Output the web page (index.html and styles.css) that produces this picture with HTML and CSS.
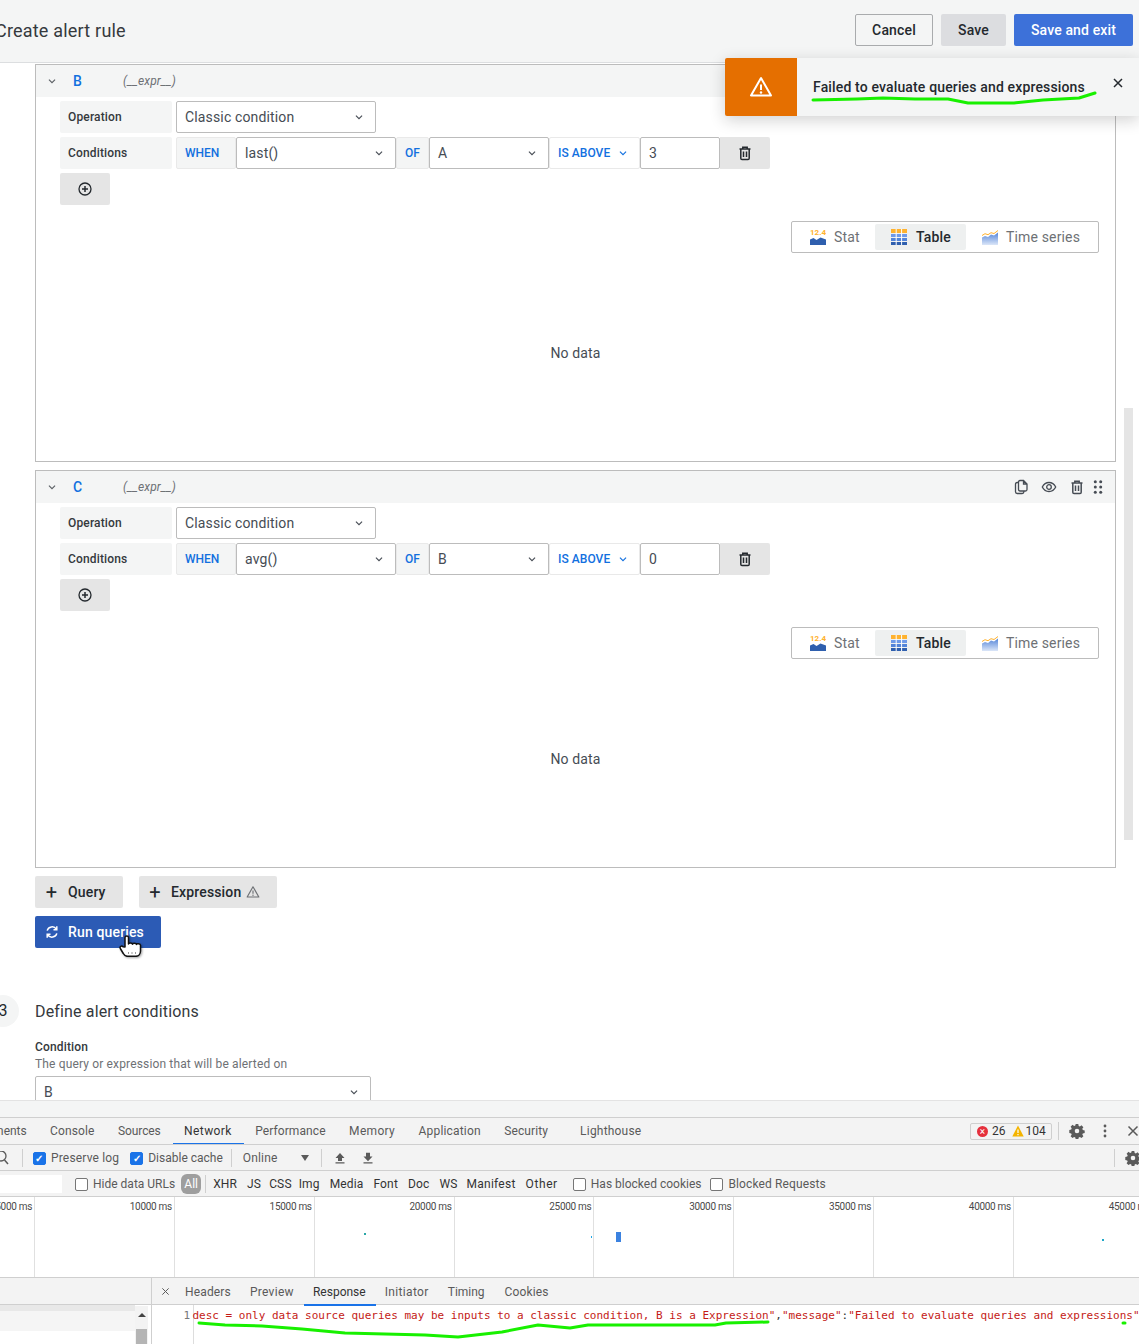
FILE: index.html
```html
<!DOCTYPE html>
<html lang="en">
<head>
<meta charset="utf-8">
<title>Create alert rule</title>
<link rel="stylesheet" href="styles.css">
</head>
<body>
<svg class="sprite" width="0" height="0">
  <defs>
    <symbol id="chev" viewBox="0 0 16 16"><path d="M4.500 6.500 8 10l3.500-3.500" fill="none" stroke="currentColor" stroke-width="1.300"/></symbol>
    <symbol id="trash" viewBox="0 0 16 16"><path d="M2.500 4h11M5.800 4V2.300h4.400V4M3.800 4v9.200c0 .7.500 1.300 1.200 1.300h6c.7 0 1.200-.6 1.200-1.300V4M6.500 6.500v5.500M9.500 6.500v5.500" fill="none" stroke="currentColor" stroke-width="1.500"/></symbol>
    <symbol id="plusc" viewBox="0 0 16 16"><circle cx="8" cy="8" r="6" fill="none" stroke="currentColor" stroke-width="1.300"/><path d="M8 5v6M5 8h6" stroke="currentColor" stroke-width="1.500"/></symbol>
    <symbol id="copy" viewBox="0 0 16 16"><path d="M5.500 3.500H4.200C3 3.500 2.500 4 2.500 5.200v7.600c0 1.200.5 1.700 1.700 1.700h5c1.200 0 1.700-.5 1.700-1.700v-.8M5.500 10.300V3c0-1 .5-1.500 1.500-1.500h3.500l3.500 3.500v5.500c0 1-.5 1.500-1.500 1.500H7c-1 0-1.500-.5-1.500-1.700zM10.500 1.500V5H14" fill="none" stroke="currentColor" stroke-width="1.300"/></symbol>
    <symbol id="eye" viewBox="0 0 16 16"><path d="M1.300 8C2.800 5 5.200 3.500 8 3.500S13.200 5 14.700 8c-1.500 3-3.900 4.500-6.700 4.500S2.800 11 1.300 8z" fill="none" stroke="currentColor" stroke-width="1.300"/><circle cx="8" cy="8" r="2.300" fill="none" stroke="currentColor" stroke-width="1.300"/></symbol>
    <symbol id="dots" viewBox="0 0 16 16"><g fill="currentColor"><circle cx="5.300" cy="2.800" r="1.500"/><circle cx="10.700" cy="2.800" r="1.500"/><circle cx="5.300" cy="8" r="1.500"/><circle cx="10.700" cy="8" r="1.500"/><circle cx="5.300" cy="13.200" r="1.500"/><circle cx="10.700" cy="13.200" r="1.500"/></g></symbol>
    <symbol id="stat" viewBox="0 0 16 16"><path d="M0 10.500 3.500 9l3 2 4-2.500L16 10.500V16H0z" fill="#2f5fae"/><text x="0" y="6" font-family="Roboto" font-size="8" font-weight="700" letter-spacing="0" fill="#ffb22e">12.4</text></symbol>
    <symbol id="tbl" viewBox="0 0 16 16"><rect width="16" height="4" fill="#ffb22e"/><rect y="5" width="16" height="3" fill="#6f9ae8"/><rect y="9" width="16" height="3" fill="#5384d8"/><rect y="13" width="16" height="3" fill="#2f5fae"/><path d="M5.200 0v16M10.600 0v16" stroke="#fff" stroke-width="1"/></symbol>
    <symbol id="ts" viewBox="0 0 16 16"><defs><linearGradient id="tsg" x1="0" y1="0" x2="0" y2="1"><stop offset="0" stop-color="#5384d8"/><stop offset="1" stop-color="#dbe6f8"/></linearGradient></defs><path d="M0 8.500l3-1.500 3 1 3-2.500 3 1 4-3V16H0z" fill="url(#tsg)"/><path d="M0 6.500l3-1.800 3 1 3-2 3 .8L16 1.500" fill="none" stroke="#ffb22e" stroke-width="1"/></symbol>
    <symbol id="warn" viewBox="0 0 24 24"><path d="M12 3 2 20.500h20z" fill="none" stroke="currentColor" stroke-width="2" stroke-linejoin="round"/><path d="M12 9.500v5.500" stroke="currentColor" stroke-width="2"/><circle cx="12" cy="17.500" r="1.200" fill="currentColor"/></symbol>
    <symbol id="gear" viewBox="0 0 16 16"><path fill="currentColor" fill-rule="evenodd" d="M6.700 1h2.600l.4 1.900 1.200.5 1.600-1.100 1.900 1.900-1.100 1.600.5 1.200 1.900.4v2.600l-1.900.4-.5 1.200 1.100 1.600-1.900 1.900-1.600-1.100-1.200.5-.4 1.900H6.700l-.4-1.900-1.200-.5-1.600 1.100-1.900-1.900 1.100-1.600-.5-1.200-1.900-.4V6.900l1.900-.4.5-1.200-1.100-1.600 1.900-1.900 1.600 1.100 1.200-.5zM8 5.700a2.300 2.300 0 1 0 0 4.600 2.300 2.300 0 0 0 0-4.600z"/></symbol>
  </defs>
</svg>

<div class="app">
  <header class="topbar">
    <h1 class="page-title">Create alert rule</h1>
    <div class="actions">
      <button class="btn btn-outline">Cancel</button>
      <button class="btn btn-grey">Save</button>
      <button class="btn btn-blue">Save and exit</button>
    </div>
  </header>

  <main class="main">
    <section class="card">
      <div class="card-head">
        <svg class="ic14 muted"><use href="#chev"/></svg>
        <span class="ref">B</span>
        <span class="expr">(__expr__)</span>
      </div>
      <div class="card-body">
        <div class="row">
          <label class="lbl">Operation</label>
          <div class="sel sel-op"><span>Classic condition</span><svg class="ic14"><use href="#chev"/></svg></div>
        </div>
        <div class="row">
          <label class="lbl">Conditions</label>
          <div class="kw kw-when">WHEN</div>
          <div class="sel sel-fn"><span>last()</span><svg class="ic14"><use href="#chev"/></svg></div>
          <div class="kw kw-of">OF</div>
          <div class="sel sel-q"><span>A</span><svg class="ic14"><use href="#chev"/></svg></div>
          <div class="kw kw-above">IS ABOVE<svg class="ic14"><use href="#chev"/></svg></div>
          <div class="val">3</div>
          <div class="del"><svg class="ic16"><use href="#trash"/></svg></div>
        </div>
        <div class="add"><svg class="ic16"><use href="#plusc"/></svg></div>
        <div class="viz-row">
          <div class="viz">
            <span class="viz-item"><svg class="ic16"><use href="#stat"/></svg>Stat</span>
            <span class="viz-item active"><svg class="ic16"><use href="#tbl"/></svg>Table</span>
            <span class="viz-item"><svg class="ic16"><use href="#ts"/></svg>Time series</span>
          </div>
        </div>
        <div class="nodata">No data</div>
      </div>
    </section>

    <section class="card">
      <div class="card-head">
        <svg class="ic14 muted"><use href="#chev"/></svg>
        <span class="ref">C</span>
        <span class="expr">(__expr__)</span>
        <div class="card-tools">
          <svg class="ic16"><use href="#copy"/></svg>
          <svg class="ic16"><use href="#eye"/></svg>
          <svg class="ic16"><use href="#trash"/></svg>
          <svg class="ic16 grip"><use href="#dots"/></svg>
        </div>
      </div>
      <div class="card-body">
        <div class="row">
          <label class="lbl">Operation</label>
          <div class="sel sel-op"><span>Classic condition</span><svg class="ic14"><use href="#chev"/></svg></div>
        </div>
        <div class="row">
          <label class="lbl">Conditions</label>
          <div class="kw kw-when">WHEN</div>
          <div class="sel sel-fn"><span>avg()</span><svg class="ic14"><use href="#chev"/></svg></div>
          <div class="kw kw-of">OF</div>
          <div class="sel sel-q"><span>B</span><svg class="ic14"><use href="#chev"/></svg></div>
          <div class="kw kw-above">IS ABOVE<svg class="ic14"><use href="#chev"/></svg></div>
          <div class="val">0</div>
          <div class="del"><svg class="ic16"><use href="#trash"/></svg></div>
        </div>
        <div class="add"><svg class="ic16"><use href="#plusc"/></svg></div>
        <div class="viz-row">
          <div class="viz">
            <span class="viz-item"><svg class="ic16"><use href="#stat"/></svg>Stat</span>
            <span class="viz-item active"><svg class="ic16"><use href="#tbl"/></svg>Table</span>
            <span class="viz-item"><svg class="ic16"><use href="#ts"/></svg>Time series</span>
          </div>
        </div>
        <div class="nodata">No data</div>
      </div>
    </section>

    <div class="add-row">
      <button class="btn btn-soft btn-query"><span class="plus">+</span>Query</button>
      <button class="btn btn-soft btn-expr"><span class="plus">+</span>Expression<svg class="ic14 warn-ic"><use href="#warn"/></svg></button>
    </div>
    <button class="btn btn-run">
      <svg class="ic14" viewBox="0 0 16 16"><path d="M2.500 6.500A5.700 5.700 0 0 1 13 5M13.500 9.500A5.700 5.700 0 0 1 3 11M13.500 1.500V5.300H9.700M2.500 14.500v-3.800h3.800" fill="none" stroke="currentColor" stroke-width="1.700"/></svg>
      Run queries
    </button>

    <div class="sec-head">
      <span class="sec-num">3</span>
      <h2 class="sec-title">Define alert conditions</h2>
    </div>
    <div class="field-label">Condition</div>
    <div class="field-desc">The query or expression that will be alerted on</div>
    <div class="sel sel-cond"><span>B</span><svg class="ic14"><use href="#chev"/></svg></div>
    <div class="page-scroll"></div>
  </main>

  <div class="strip"></div>

  <div class="dt">
    <div class="dt-bar dt-tabs">
      <span class="tab tab-first">Elements</span>
      <span class="tab t-console">Console</span>
      <span class="tab t-sources">Sources</span>
      <span class="tab on t-network">Network</span>
      <span class="tab t-perf">Performance</span>
      <span class="tab t-memory">Memory</span>
      <span class="tab t-app">Application</span>
      <span class="tab t-sec">Security</span>
      <span class="tab tab-light">Lighthouse</span>
      <span class="dt-right">
        <span class="badge"><i class="b-err">×</i>26<svg class="b-warn" viewBox="0 0 12 12"><path d="M6 .5 .3 11.500h11.400z" fill="#f4b400"/><path d="M6 4.500v3.500M6 9v1.200" stroke="#fff" stroke-width="1.200"/></svg>104</span>
        <i class="vsep"></i>
        <svg class="dt-gear"><use href="#gear"/></svg>
        <svg class="dt-more" viewBox="0 0 4 14"><g fill="#5a5a5a"><circle cx="2" cy="2" r="1.400"/><circle cx="2" cy="7" r="1.400"/><circle cx="2" cy="12" r="1.400"/></g></svg>
        <svg class="dt-x" viewBox="0 0 12 12"><path d="M1.500 1.500l9 9M10.500 1.500l-9 9" stroke="#5a5a5a" stroke-width="1.500"/></svg>
      </span>
    </div>

    <div class="dt-bar dt-tool">
      <svg class="dt-search" viewBox="0 0 14 14"><circle cx="4" cy="5" r="5" fill="none" stroke="#5a5a5a" stroke-width="1.300"/><path d="M7.500 9l3.500 4" stroke="#5a5a5a" stroke-width="1.500"/></svg>
      <i class="vsep s1"></i>
      <label class="chk c1"><i class="box checked">✓</i>Preserve log</label>
      <label class="chk c2"><i class="box checked">✓</i>Disable cache</label>
      <i class="vsep s2"></i>
      <span class="online">Online</span>
      <i class="caret"></i>
      <i class="vsep s3"></i>
      <svg class="arrow a1" viewBox="0 0 12 12"><path d="M6 1 1.500 6H4v3h4V6h2.500zM1.500 10.300h9v1.200h-9z" fill="#5a5a5a"/></svg>
      <svg class="arrow a2" viewBox="0 0 12 12"><path d="M6 9.200 1.500 4.500H4V.8h4v3.700h2.500zM1.500 10.300h9v1.200h-9z" fill="#5a5a5a"/></svg>
      <span class="dt-right">
        <i class="vsep"></i>
        <svg class="dt-gear g2"><use href="#gear"/></svg>
      </span>
    </div>

    <div class="dt-bar dt-filter">
      <span class="filter-input"></span>
      <label class="chk f1"><i class="box"></i>Hide data URLs</label>
      <span class="pill">All</span>
      <i class="vsep s4"></i>
      <span class="ft ft-xhr">XHR</span>
      <span class="ft ft-js">JS</span>
      <span class="ft ft-css">CSS</span>
      <span class="ft ft-img">Img</span>
      <span class="ft ft-media">Media</span>
      <span class="ft ft-font">Font</span>
      <span class="ft ft-doc">Doc</span>
      <span class="ft ft-ws">WS</span>
      <span class="ft ft-man">Manifest</span>
      <span class="ft ft-other">Other</span>
      <label class="chk f2"><i class="box"></i>Has blocked cookies</label>
      <label class="chk f3"><i class="box"></i>Blocked Requests</label>
    </div>

    <div class="timeline">
      <div class="tick">5000 ms</div>
      <div class="tick">10000 ms</div>
      <div class="tick">15000 ms</div>
      <div class="tick">20000 ms</div>
      <div class="tick">25000 ms</div>
      <div class="tick">30000 ms</div>
      <div class="tick">35000 ms</div>
      <div class="tick">40000 ms</div>
      <div class="tick">45000 ms</div>
      <i class="mark m1"></i><i class="mark m2"></i><i class="mark m3"></i><i class="mark m4"></i>
    </div>

    <div class="split">
      <div class="list-pane">
        <div class="list-head"></div>
        <div class="list-gap"></div>
        <div class="list-row"></div>
        <div class="list-scroll"><i class="up"></i><i class="thumb"></i></div>
      </div>
      <div class="detail">
        <div class="detail-tabs">
          <svg class="detail-x" viewBox="0 0 10 10"><path d="M1.500 1.500l7 7M8.500 1.500l-7 7" stroke="#5a5a5a" stroke-width="1.100"/></svg>
          <span class="dtab d-head">Headers</span>
          <span class="dtab d-prev">Preview</span>
          <span class="dtab on">Response</span>
          <span class="dtab d-init">Initiator</span>
          <span class="dtab d-time">Timing</span>
          <span class="dtab d-head">Cookies</span>
        </div>
        <div class="code">
          <div class="gutter">1</div>
          <div class="code-line"><span class="str">desc = only data source queries may be inputs to a classic condition, B is a Expression"</span><span class="pun">,</span><span class="str">"message"</span><span class="pun">:</span><span class="str">"Failed to evaluate queries and expressions"</span></div>
        </div>
      </div>
    </div>
  </div>
</div>

<div class="toast">
  <div class="toast-icon"><svg class="toast-warn"><use href="#warn"/></svg></div>
  <div class="toast-text">Failed to evaluate queries and expressions</div>
  <svg class="toast-x" viewBox="0 0 12 12"><path d="M2 2l8 8M10 2l-8 8" stroke="#24292e" stroke-width="1.500"/></svg>
</div>

<svg class="hand" viewBox="0 0 23 22">
  <path d="M6 12V2.500c0-2 3.500-2 3.500 0V9c0-1.300 4-1.300 4 .2 0-1.300 4-1.300 4 .3 0-1.300 4-1 4 .8V16c0 3-2 5.300-4.800 5.300H8.500c-2 0-3.200-1-4.200-2.800l-3-5c-1.100-2 1.500-3.200 2.700-1.700z" fill="#fff" stroke="#111" stroke-width="1.500" stroke-linejoin="round"/>
  <path d="M9.500 17v2M13 17v2M16.500 17v2" stroke="#999" stroke-width="1"/>
</svg>

<svg class="scribble" viewBox="0 0 1139 1344">
  <polyline points="813,100 857,99 883,98 915,99 948,99 968,103 1014,103 1043,100 1079,98 1095,93"/>
  <polyline points="199,1323 225,1325 262,1326 302,1329 345,1333 425,1335 458,1337 502,1332 538,1325 570,1328 588,1325 715,1325 726,1323 768,1322"/>
  <polyline points="1123,1323 1125,1323"/>
</svg>
</body>
</html>
```

FILE: styles.css
```css
* { box-sizing: border-box; }
html, body { margin: 0; padding: 0; width: 1139px; height: 1344px; overflow: hidden; background: #fff; }
body { position: relative; font-family: Roboto, sans-serif; color: #24292e; font-size: 14px; letter-spacing: .15px; }
.sprite { position: absolute; }
button { font-family: inherit; letter-spacing: inherit; }
i { font-style: normal; display: block; }

.app { display: flex; flex-direction: column; height: 1344px; }

.topbar { height: 63px; flex: none; background: #f4f5f5; border-bottom: 1px solid #dcdee0; display: flex; justify-content: space-between; padding: 14px 6px 0 0; }
.page-title { margin: 1px 0 0 -5px; font-size: 18px; font-weight: 400; line-height: 32px; color: #35393d; letter-spacing: .2px; }
.actions { display: flex; gap: 8px; }

.btn { height: 32px; border: 0; border-radius: 2px; font-size: 14px; font-weight: 500; display: inline-flex; align-items: center; padding: 0; white-space: nowrap; }
.btn-outline { width: 78px; justify-content: center; background: transparent; border: 1px solid #a9abad; color: #24292e; }
.btn-grey { width: 65px; justify-content: center; background: #dcdde0; color: #24292e; }
.btn-blue { width: 119px; justify-content: center; background: #3d71d9; color: #fff; }

.main { height: 1037px; flex: none; overflow: hidden; padding: 1px 23px 0 35px; position: relative; }

.card { height: 398px; border: 1px solid #bcbcbc; margin-bottom: 8px; }
.card-head { height: 32px; background: #f4f5f5; display: flex; align-items: center; padding-left: 9px; }
.muted { color: #5a5f64; }
.ref { color: #1270df; font-weight: 500; margin-left: 14px; width: 50px; }
.expr { color: #6e7175; font-size: 12px; font-style: italic; }
.card-tools { margin-left: auto; display: flex; align-items: center; color: #464c54; padding-right: 9px; }
.card-tools svg { margin-left: 12px; }
.card-tools .grip { margin-left: 5px; }

.card-body { padding: 4px 24px 0; position: relative; }
.row { display: flex; height: 32px; margin-bottom: 4px; }
.lbl { width: 112px; margin-right: 4px; background: #f4f5f5; border-radius: 2px; font-size: 12px; font-weight: 500; line-height: 32px; padding-left: 8px; color: #35393d; }
.sel { height: 32px; background: #fff; border: 1px solid #bcbcbc; border-radius: 2px; display: flex; align-items: center; justify-content: space-between; padding: 0 9px 0 8px; color: #464c54; font-size: 14px; flex: none; }
.sel-op { width: 200px; }
.sel-fn { width: 160px; }
.sel-q { width: 120px; }
.sel-cond { width: 336px; }
.ic14 { width: 14px; height: 14px; flex: none; }
.ic16 { width: 16px; height: 16px; flex: none; }
.kw { height: 32px; background: #f4f5f5; border: 1px solid #e9e9e9; color: #1270df; font-size: 12px; font-weight: 500; display: flex; align-items: center; justify-content: center; border-radius: 2px; flex: none; letter-spacing: 0; }
.kw-when { width: 60px; justify-content: flex-start; padding-left: 8px; }
.kw-of { width: 33px; }
.kw-above { width: 91px; background: #fff; gap: 6px; justify-content: flex-start; padding-left: 8px; letter-spacing: .05px; }
.val { width: 80px; height: 32px; border: 1px solid #bcbcbc; border-radius: 2px; padding-left: 8px; line-height: 30px; color: #464c54; }
.del { width: 50px; height: 32px; background: #e5e5e5; display: flex; align-items: center; justify-content: center; border-radius: 0 2px 2px 0; color: #24292e; }
.add { width: 50px; height: 32px; background: #e5e5e5; border-radius: 2px; display: flex; align-items: center; justify-content: center; color: #24292e; }

.viz-row { display: flex; justify-content: flex-end; margin-top: 16px; margin-right: -8px; }
.viz { width: 308px; height: 32px; border: 1px solid #bcbcbc; border-radius: 2px; display: flex; align-items: center; padding: 2px 0 2px 2px; }
.viz-item { height: 26px; display: flex; align-items: center; gap: 8px; color: #6e7175; padding: 0 16px; }
.viz-item:first-child { width: 81px; }
.viz-item.active { width: 91px; background: #eef0f0; border-radius: 2px; color: #24292e; font-weight: 500; gap: 9px; }
.nodata { text-align: center; margin: 92px -1px 0; line-height: 16px; color: #464c54; }

.add-row { display: flex; gap: 16px; margin-bottom: 8px; }
.btn-soft { background: #e5e5e5; color: #24292e; }
.plus { font-size: 20px; font-weight: 400; width: 33px; text-align: center; line-height: 28px; }
.btn-query { width: 88px; }
.btn-expr { width: 138px; }
.btn-expr .plus { width: 32px; }
.warn-ic { margin-left: 5px; color: #6e7175; }
.btn-run { display: flex; width: 126px; background: #2c5bb5; color: #fff; gap: 9px; padding-left: 10px; }

.sec-head { display: flex; align-items: center; margin: 47px 0 0 -48px; gap: 16px; height: 32px; }
.sec-num { width: 32px; height: 32px; border-radius: 50%; background: #f4f5f5; text-align: center; line-height: 32px; font-size: 16px; color: #24292e; }
.sec-title { margin: 0; font-size: 16px; font-weight: 400; color: #35393d; }
.field-label { margin-top: 12px; font-size: 12px; font-weight: 500; line-height: 16px; color: #35393d; }
.field-desc { font-size: 12px; line-height: 16px; margin-top: 1px; margin-bottom: 4px; color: #6e7175; }
.page-scroll { position: absolute; right: 6px; top: 345px; width: 9px; height: 432px; background: #e5e5e5; }

.strip { height: 17px; flex: none; background: #f4f5f5; border-top: 1px solid #e3e3e3; }

.dt { flex: 1; background: #f3f3f3; font-size: 12px; color: #5a5a5a; overflow: hidden; letter-spacing: 0; }
.dt-bar { display: flex; align-items: center; border-top: 1px solid #cfcfcf; white-space: nowrap; position: relative; }
.dt-tabs { height: 27px; padding-left: 27px; }
.tab { margin-left: 23.400px; line-height: 26px; position: relative; }
.tab-first { margin-left: -50px; width: 49.600px; }
.t-console { letter-spacing: .15px; }
.t-sources { letter-spacing: -.1px; }
.t-network { letter-spacing: .4px; }
.t-perf { letter-spacing: .1px; }
.t-memory { letter-spacing: .33px; }
.t-app { letter-spacing: .18px; }
.t-sec { letter-spacing: .12px; }
.tab-light { margin-left: 32px; letter-spacing: .2px; }
.tab.on { color: #333; }
.tab.on::after { content: ""; position: absolute; left: -11px; right: -12px; bottom: -1px; height: 2px; background: #1a73e8; }
.dt-right { margin-left: auto; display: flex; align-items: center; }
.badge { width: 82px; height: 17px; border: 1px solid #cfcfcf; border-radius: 2px; background: #f3f3f3; display: flex; align-items: center; padding-left: 6px; color: #333; }
.b-err { width: 11px; height: 11px; border-radius: 50%; background: #e5303c; color: #fff; font-size: 10px; line-height: 11px; text-align: center; margin-right: 4px; }
.b-warn { width: 12px; height: 12px; margin: 0 2px 0 6px; }
.vsep { width: 1px; height: 18px; background: #cfcfcf; flex: none; }
.dt-tabs .vsep { margin-left: 6px; }
.dt-gear { width: 16px; height: 16px; color: #5a5a5a; flex: none; }
.dt-tabs .dt-gear { margin-left: 10px; }
.dt-more { width: 4px; height: 14px; margin-left: 18px; }
.dt-x { width: 12px; height: 12px; margin-left: 20px; flex: none; }

.dt-tool { height: 26px; padding-top: 1px; }
.dt-search { width: 14px; height: 14px; margin-left: -3px; }
.s1 { margin-left: 11px; }
.chk { display: flex; align-items: center; }
.box { width: 13px; height: 13px; border: 1px solid #767676; border-radius: 2px; background: #fff; margin-right: 5px; color: #fff; font-size: 10px; line-height: 12px; text-align: center; font-weight: 700; }
.box.checked { background: #1a73e8; border-color: #1a73e8; }
.c1 { margin-left: 10px; letter-spacing: .17px; }
.c2 { margin-left: 11px; }
.s2 { margin-left: 8px; }
.online { margin-left: 11px; letter-spacing: .15px; }
.caret { width: 0; height: 0; border-left: 4px solid transparent; border-right: 4px solid transparent; border-top: 6px solid #5a5a5a; margin-left: 24px; }
.s3 { margin-left: 12px; }
.arrow { width: 12px; height: 12px; flex: none; }
.a1 { margin-left: 12px; }
.a2 { margin-left: 16px; }
.g2 { margin-left: 10px; margin-right: -2px; }

.dt-filter { height: 26px; padding-top: 1px; }
.filter-input { width: 62px; height: 18px; background: #fff; flex: none; }
.f1 { margin-left: 13px; }
.pill { width: 20px; height: 20px; background: #9e9e9e; color: #fff; border-radius: 6px; text-align: center; line-height: 20px; margin-left: 6px; flex: none; }
.s4 { margin-left: 4px; }
.ft { color: #333; flex: none; letter-spacing: .15px; }
.ft-xhr { margin-left: 7px; }
.ft-js { margin-left: 10px; }
.ft-css { margin-left: 8px; }
.ft-img { margin-left: 7px; }
.ft-media { margin-left: 10px; }
.ft-font { margin-left: 10px; }
.ft-doc { margin-left: 10px; }
.ft-ws { margin-left: 10px; }
.ft-man { margin-left: 9px; letter-spacing: .25px; }
.ft-other { margin-left: 10px; letter-spacing: .6px; }
.f2 { margin-left: 15px; }
.f3 { margin-left: 9px; letter-spacing: .12px; }

.timeline { height: 82px; background: #fff; border-top: 1px solid #cfcfcf; border-bottom: 1px solid #cfcfcf; display: flex; position: relative; font-size: 10px; letter-spacing: -.3px; color: #4a4a4a; overflow: hidden; }
.tick { flex: none; width: 139.850px; border-right: 1px solid #e0e0e0; text-align: right; padding: 3px 2px 0 0; white-space: nowrap; line-height: 14px; }
.tick:first-child { margin-left: -104.800px; }
.mark { position: absolute; }
.m1 { left: 364px; top: 36px; width: 2px; height: 2px; background: #2aa7a7; }
.m2 { left: 591px; top: 39px; width: 1px; height: 2px; background: #1ea7e8; }
.m3 { left: 616px; top: 35px; width: 5px; height: 10px; background: #3b82e0; }
.m4 { left: 1102px; top: 42px; width: 2px; height: 2px; background: #1ea7c8; }

.split { display: flex; height: 66px; }
.list-pane { width: 152px; flex: none; border-right: 1px solid #cfcfcf; background: #fff; position: relative; }
.list-head { height: 27px; background: #f3f3f3; border-bottom: 1px solid #cfcfcf; }
.list-gap { height: 6px; background: #e8e8e8; width: 135px; }
.list-row { height: 20px; background: #f5f5f5; width: 135px; }
.list-scroll { position: absolute; right: 3px; top: 28px; width: 13px; height: 39px; background: #f3f3f3; }
.up { width: 0; height: 0; border-left: 4px solid transparent; border-right: 4px solid transparent; border-bottom: 4px solid #444; margin: 7px auto 0; }
.thumb { width: 11px; height: 20px; background: #b5b5b5; margin: 12px auto 0; }
.detail { flex: 1; background: #fff; min-width: 0; }
.detail-tabs { height: 27px; background: #f3f3f3; border-bottom: 1px solid #cfcfcf; display: flex; align-items: center; padding: 1px 0 0 9px; }
.detail-x { width: 9px; height: 9px; flex: none; margin-right: 15px; }
.dtab { margin-right: 19px; line-height: 26px; position: relative; }
.d-head { letter-spacing: .15px; }
.d-prev { letter-spacing: .3px; }
.d-init { letter-spacing: .35px; }
.d-time { margin-right: 20px; }
.dtab.on { color: #333; }
.dtab.on::after { content: ""; position: absolute; left: -9px; right: -10px; bottom: -1px; height: 2px; background: #1a73e8; }
.code { display: flex; font-family: "DejaVu Sans Mono", monospace; font-size: 11px; line-height: 15px; }
.gutter { width: 42px; flex: none; height: 40px; border-right: 1px solid #ddd; text-align: right; padding: 3px 3px 0 0; color: #777; }
.code-line { white-space: nowrap; padding-top: 3px; margin-left: -1.500px; }
.str { color: #c41a16; }
.pun { color: #333; }

.toast { position: absolute; left: 725px; top: 58px; width: 414px; height: 58px; background: #f4f5f5; box-shadow: 0 4px 16px rgba(24,26,27,.2); display: flex; align-items: center; border-radius: 2px 0 0 2px; }
.toast-icon { width: 72px; height: 58px; background: #e56f00; display: flex; align-items: center; justify-content: center; color: #fff; border-radius: 2px 0 0 2px; }
.toast-warn { width: 24px; height: 24px; }
.toast-text { margin-left: 16px; font-size: 14px; font-weight: 500; color: #24292e; white-space: nowrap; }
.toast-x { width: 12px; height: 12px; position: absolute; left: 387px; top: 19px; }

.hand { position: absolute; left: 119px; top: 935px; width: 23px; height: 22px; filter: drop-shadow(1px 1px 1px rgba(0,0,0,.35)); }
.scribble { position: absolute; left: 0; top: 0; width: 1139px; height: 1344px; pointer-events: none; }
.scribble polyline { fill: none; stroke: #18f000; stroke-width: 3; stroke-linecap: round; stroke-linejoin: round; }
```
